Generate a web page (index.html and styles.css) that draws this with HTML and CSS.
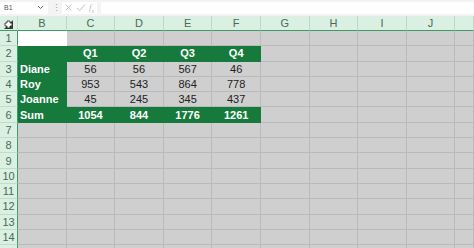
FILE: index.html
```html
<!DOCTYPE html>
<html lang="en">
<head>
    <meta charset="UTF-8">
    <title>Sheet</title>
    <link rel="stylesheet" href="styles.css">
</head>
<body>
    <div class="formula-bar">
        <div class="name-box">
            <span>B1</span>
            <svg class="caret" width="7" height="5" viewBox="0 0 7 5"><path d="M1 1 L3.5 3.5 L6 1" fill="none" stroke="#666" stroke-width="1"/></svg>
        </div>
        <span class="dots">&#8942;</span>
        <div class="fx-icons">
            <svg width="9" height="9" viewBox="0 0 9 9"><path d="M1.5 1.5 L7.5 7.5 M7.5 1.5 L1.5 7.5" stroke="#c4c4c4" stroke-width="1"/></svg>
            <svg width="10" height="9" viewBox="0 0 10 9"><path d="M1 5 L3.8 7.6 L9 1.5" fill="none" stroke="#c4c4c4" stroke-width="1"/></svg>
            <span class="fx">f<sub>x</sub></span>
        </div>
        <div class="formula-input"></div>
    </div>

    <div class="sheet" id="sheet"></div>

    <script>
        const sheet = document.getElementById('sheet');
        // the last column only peeks in at the right edge, its letter is off screen
        const COLS = ['B', 'C', 'D', 'E', 'F', 'G', 'H', 'I', 'J', ''];
        const ROWS = 15;

        // table content, rows 2-6 / columns B-F
        const data = {
            2: ['', 'Q1', 'Q2', 'Q3', 'Q4'],
            3: ['Diane', '56', '56', '567', '46'],
            4: ['Roy', '953', '543', '864', '778'],
            5: ['Joanne', '45', '245', '345', '437'],
            6: ['Sum', '1054', '844', '1776', '1261']
        };

        function cell(cls, text) {
            const div = document.createElement('div');
            div.className = cls;
            if (text) div.textContent = text;
            sheet.appendChild(div);
        }

        // corner + column headers
        const corner = document.createElement('div');
        corner.className = 'corner';
        corner.innerHTML = '<svg width="14" height="12" viewBox="0 0 14 12"><path d="M11 2 L11 11 L2 11 Z" fill="#3a3a3a"/><path d="M5 3 h3 v2 h2 v3 h-2 v2 h-3 v-2 h-2 v-3 h2 Z" fill="#fff" stroke="#222" stroke-width="0.8"/></svg>';
        sheet.appendChild(corner);
        COLS.forEach(c => cell('col-head', c));

        for (let r = 1; r <= ROWS; r++) {
            // last row only peeks in at the bottom edge
            cell('row-head', r < ROWS ? String(r) : '');
            COLS.forEach((c, i) => {
                let cls = 'cell';
                let text = '';
                if (r === 1 && i === 0) cls += ' blank';
                if (data[r] && i < 5) {
                    text = data[r][i];
                    const green = r === 2 || r === 6 || i === 0;
                    cls += green ? ' green' : ' value';
                    if (i === 0) cls += ' label';
                }
                cell(cls, text);
            });
        }
    </script>
</body>
</html>
```

FILE: styles.css
```css
body {
    margin: 0;
    width: 474px;
    height: 248px;
    overflow: hidden;
    background-color: #f3f3f3;
    font-family: 'Liberation Sans', Arial, sans-serif;
}

.formula-bar {
    display: flex;
    align-items: center;
    height: 15px;
    padding-bottom: 1px;
    box-sizing: content-box;
    gap: 4px;
}

.name-box {
    display: flex;
    align-items: center;
    justify-content: space-between;
    width: 48px;
    height: 12px;
    padding: 0 4px;
    box-sizing: border-box;
    background-color: #fff;
    font-size: 7px;
    color: #555;
}

.dots {
    font-size: 9px;
    color: #999;
    width: 6px;
    text-align: center;
}

.fx-icons {
    display: flex;
    align-items: center;
    gap: 3px;
    padding-left: 2px;
    height: 12px;
    background-color: #fff;
    padding-right: 3px;
}

.fx {
    font-family: 'Liberation Serif', serif;
    font-style: italic;
    font-size: 9px;
    color: #bbb;
}

.fx sub {
    font-size: 6px;
}

.formula-input {
    flex: 1;
    height: 12px;
    background-color: #fff;
}

.sheet {
    display: grid;
    grid-template-columns: 18px repeat(9, 48.6px) 1fr;
    grid-template-rows: 15px repeat(15, 15.3px);
}

.corner {
    display: flex;
    align-items: flex-end;
    justify-content: center;
    background-color: #dcefe3;
    border-bottom: 1px solid #3f9a63;
    border-right: 1px solid #c8dccf;
}

.col-head {
    display: flex;
    align-items: center;
    justify-content: center;
    background-color: #d9f0e2;
    border-bottom: 1px solid #3f9a63;
    border-right: 1px solid #bfd7c7;
    font-size: 11px;
    color: #4a6a56;
}

.row-head {
    display: flex;
    align-items: center;
    justify-content: center;
    background-color: #d9f0e2;
    border-right: 1px solid #3f9a63;
    border-bottom: 1px solid #c2dccb;
    font-size: 11px;
    color: #4a6a56;
}

.cell {
    background-color: #cfcfcf;
    border-right: 1px solid #bababa;
    border-bottom: 1px solid #bababa;
    font-size: 11px;
    display: flex;
    align-items: center;
    justify-content: center;
}

.cell.blank {
    background-color: #fff;
    border-color: #fff;
}

.cell.value {
    color: #222;
}

.cell.green {
    background-color: #177a3d;
    border-color: #177a3d;
    color: #fff;
    font-weight: bold;
}

.cell.label {
    justify-content: flex-start;
    padding-left: 2px;
}
```
